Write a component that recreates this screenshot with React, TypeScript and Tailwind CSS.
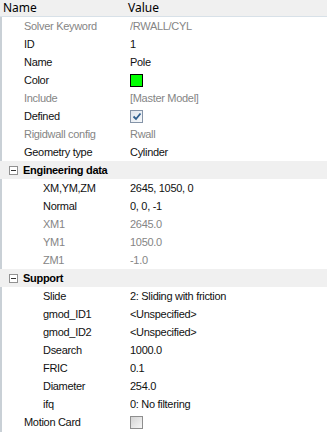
import React from "react";

type Row = {
  label: string;
  value?: React.ReactNode;
  muted?: boolean;
  indent?: boolean;
};

const FONT = { fontFamily: '"Liberation Sans", Arial, sans-serif' };

function Swatch() {
  return <div className="w-[13px] h-[13px] bg-[#00ff00] border border-black" />;
}

function Check({ checked }: { checked?: boolean }) {
  return (
    <div
      className={
        "w-[13px] h-[13px] border flex items-center justify-center " +
        (checked
          ? "border-[#8594a8] bg-gradient-to-br from-[#dfe6ee] to-[#f7f9fb]"
          : "border-[#8e8e8e] bg-gradient-to-br from-[#d4d4d4] to-[#f6f6f6]")
      }
    >
      {checked && (
        <svg width="10" height="9" viewBox="0 0 10 9">
          <path d="M1.5 4.5 L4 7 L8.5 1.5" fill="none" stroke="#2f5f8f" strokeWidth="1.8" />
        </svg>
      )}
    </div>
  );
}

function PropRow({ label, value, muted, indent }: Row) {
  const color = muted ? "text-[#858585]" : "text-[#111]";
  return (
    <div className="flex h-[18px] items-center">
      <div className={"w-[128px] shrink-0 truncate " + color + (indent ? " pl-[41px]" : " pl-[22px]")}>{label}</div>
      <div className={"flex-1 truncate " + color}>{value}</div>
    </div>
  );
}

function Category({ title }: { title: string }) {
  return (
    <div className="flex h-[18px] items-center bg-[#f0f0f0] -ml-[2px] pl-[9px]">
      <div className="w-[9px] h-[9px] border border-[#919191] bg-white flex items-center justify-center">
        <div className="w-[5px] h-px bg-[#333]" />
      </div>
      <span className="ml-[5px] font-bold text-black">{title}</span>
    </div>
  );
}

export default function App() {
  return (
    <div className="w-[327px] h-[448px] bg-white overflow-hidden text-[11px] tracking-[-0.3px]" style={FONT}>
      <div
        className="flex h-[17px] items-center bg-[#f0f0f0] border-b border-[#d8e1e8] text-[12px] tracking-normal text-black"
        style={{ fontFamily: '"Noto Sans", "Open Sans", sans-serif' }}
      >
        <div className="w-[128px] pl-[3px]">Name</div>
        <div>Value</div>
      </div>
      <div className="border-l-2 border-[#c9d0d6] h-[415px]">
        <PropRow label="Solver Keyword" value="/RWALL/CYL" muted />
        <PropRow label="ID" value="1" />
        <PropRow label="Name" value="Pole" />
        <PropRow label="Color" value={<Swatch />} />
        <PropRow label="Include" value="[Master Model]" muted />
        <PropRow label="Defined" value={<Check checked />} />
        <PropRow label="Rigidwall config" value="Rwall" muted />
        <PropRow label="Geometry type" value="Cylinder" />
        <Category title="Engineering data" />
        <PropRow indent label="XM,YM,ZM" value="2645, 1050, 0" />
        <PropRow indent label="Normal" value="0, 0, -1" />
        <PropRow indent label="XM1" value="2645.0" muted />
        <PropRow indent label="YM1" value="1050.0" muted />
        <PropRow indent label="ZM1" value="-1.0" muted />
        <Category title="Support" />
        <PropRow indent label="Slide" value="2: Sliding with friction" />
        <PropRow indent label="gmod_ID1" value="<Unspecified>" />
        <PropRow indent label="gmod_ID2" value="<Unspecified>" />
        <PropRow indent label="Dsearch" value="1000.0" />
        <PropRow indent label="FRIC" value="0.1" />
        <PropRow indent label="Diameter" value="254.0" />
        <PropRow indent label="ifq" value="0: No filtering" />
        <PropRow label="Motion Card" value={<Check />} />
      </div>
    </div>
  );
}
